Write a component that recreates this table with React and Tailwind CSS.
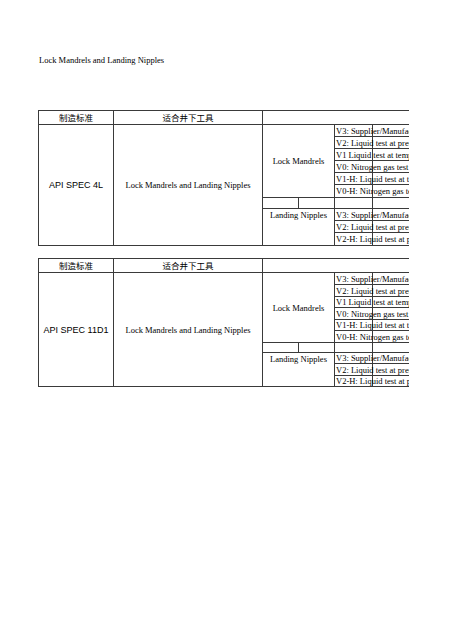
import React from "react";

const serif = { fontFamily: '"Liberation Serif", "Times New Roman", serif' };
const sans = { fontFamily: '"Liberation Sans", Arial, sans-serif' };
const cjk = { fontFamily: '"Liberation Sans", "Noto Sans CJK SC", sans-serif' };

const lockRows = [
  "V3: Supplier/Manufacturer defined",
  "V2: Liquid test at predefined temperature",
  "V1 Liquid test at temperature cycle",
  "V0: Nitrogen gas test at temperature cycle",
  "V1-H: Liquid test at temperature cycle",
  "V0-H: Nitrogen gas test at temperature cycle",
];
const nippleRows = [
  "V3: Supplier/Manufacturer defined",
  "V2: Liquid test at predefined temperature",
  "V2-H: Liquid test at predefined temperature",
];

const bd = "border border-[#3a3a3a] p-0";

function SpecTable({ spec, header, lock, empty, nipple }) {
  return (
    <div className="w-[371px] overflow-hidden">
      <table className="border-collapse table-fixed w-[534px] text-[8.5px] leading-[10px] text-black">
        <colgroup>
          <col className="w-[75px]" />
          <col className="w-[149px]" />
          <col className="w-[36px]" />
          <col className="w-[36px]" />
          <col className="w-[38px]" />
          <col className="w-[200px]" />
        </colgroup>
        <tbody>
          <tr style={{ height: header }}>
            <td className={`${bd} text-center`} style={cjk}>制造标准</td>
            <td className={`${bd} text-center`} style={cjk}>适合井下工具</td>
            <td className={bd} colSpan={4}></td>
          </tr>
          {lock.map((h, i) => (
            <tr key={"l" + i} style={{ height: h }}>
              {i === 0 && (
                <>
                  <td className={`${bd} text-center align-middle text-[9px]`} rowSpan={10} style={sans}>
                    {spec}
                  </td>
                  <td className={`${bd} text-center align-middle`} rowSpan={10} style={serif}>
                    Lock Mandrels and Landing Nipples
                  </td>
                  <td className={`${bd} text-center align-middle`} colSpan={2} rowSpan={6} style={serif}>
                    Lock Mandrels
                  </td>
                </>
              )}
              <td className={`${bd} whitespace-nowrap overflow-visible pl-[1px] align-middle`} style={serif}>
                {lockRows[i]}
              </td>
              <td className={bd}></td>
            </tr>
          ))}
          <tr style={{ height: empty }}>
            <td className={bd}></td>
            <td className={bd}></td>
            <td className={bd}></td>
            <td className={bd}></td>
          </tr>
          {nipple.map((h, i) => (
            <tr key={"n" + i} style={{ height: h }}>
              {i === 0 && (
                <td className={`${bd} text-center align-top pt-[1px]`} colSpan={2} rowSpan={3} style={serif}>
                  Landing Nipples
                </td>
              )}
              <td className={`${bd} whitespace-nowrap overflow-visible pl-[1px] align-middle`} style={serif}>
                {nippleRows[i]}
              </td>
              <td className={bd}></td>
            </tr>
          ))}
        </tbody>
      </table>
    </div>
  );
}

export default function App() {
  return (
    <div className="w-[474px] h-[632px] bg-white overflow-hidden pl-[38px] pt-[55px]">
      <div className="text-[8.5px] leading-[10px] text-black pl-[1px]" style={serif}>
        Lock Mandrels and Landing Nipples
      </div>
      <div className="mt-[45px]">
        <SpecTable
          spec="API SPEC 4L"
          header={14}
          lock={[12, 12, 12, 12, 12, 13]}
          empty={11}
          nipple={[12, 12, 13]}
        />
      </div>
      <div className="mt-[12px]">
        <SpecTable
          spec="API SPEC 11D1"
          header={14}
          lock={[12, 12, 11, 12, 11, 12]}
          empty={10}
          nipple={[11, 12, 11]}
        />
      </div>
    </div>
  );
}
